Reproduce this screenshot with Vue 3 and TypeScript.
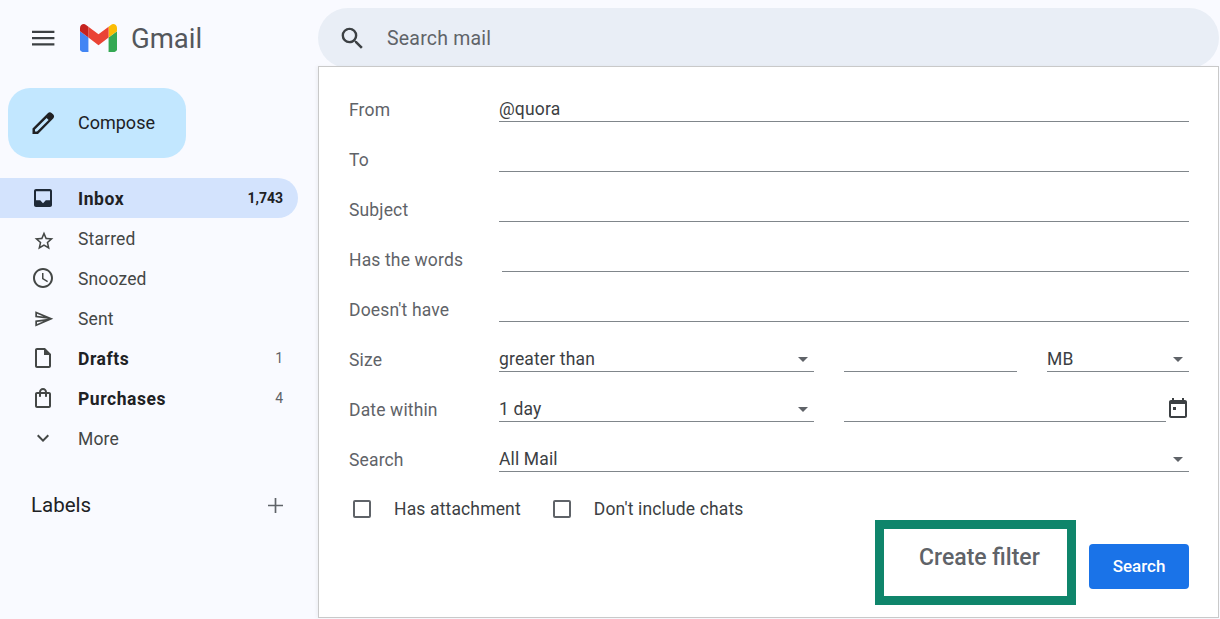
<script setup lang="ts">
interface NavItem {
  label: string
  icon: string
  box?: string
  count?: string
  bold?: boolean
  active?: boolean
}

const navItems: NavItem[] = [
  {
    label: 'Inbox',
    count: '1,743',
    bold: true,
    active: true,
    icon: 'M5 3h14c1.1 0 2 .9 2 2v14c0 1.1-.9 2-2 2H5c-1.1 0-2-.9-2-2V5c0-1.1.9-2 2-2zm0 2.2v9h4.2l2.8 3 2.8-3H19v-9z',
  },
  {
    label: 'Starred',
    box: '-1.8 -3.9 25.5 25.5',
    icon: 'M22 9.24l-7.19-.62L12 2 9.19 8.63 2 9.24l5.46 4.73L5.82 21 12 17.27 18.18 21l-1.63-7.03L22 9.24zM12 15.4l-3.76 2.27 1-4.28-3.32-2.88 4.38-.38L12 6.1l1.71 4.04 4.38.38-3.32 2.88 1 4.28L12 15.4z',
  },
  {
    label: 'Snoozed',
    icon: 'M11.99 2C6.47 2 2 6.48 2 12s4.47 10 9.99 10C17.52 22 22 17.52 22 12S17.52 2 11.99 2zM12 20c-4.42 0-8-3.58-8-8s3.58-8 8-8 8 3.58 8 8-3.58 8-8 8zm.5-13H11v6l5.25 3.15.75-1.23-4.5-2.67z',
  },
  {
    label: 'Sent',
    box: '-3 -3 28 28',
    icon: 'M4.01 6.03l7.51 3.22-7.52-1 .01-2.22m7.5 8.72L4 17.97v-2.22l7.51-1M2.01 3L2 10l15 2-15 2 .01 7L23 12 2.01 3z',
  },
  {
    label: 'Drafts',
    count: '1',
    bold: true,
    icon: 'M14 2H6c-1.1 0-1.99.9-1.99 2L4 20c0 1.1.89 2 1.99 2H18c1.1 0 2-.9 2-2V8l-6-6zM6 20V4h7v5h5v11H6z',
  },
  {
    label: 'Purchases',
    count: '4',
    bold: true,
    icon: 'M18 6h-2c0-2.21-1.79-4-4-4S8 3.79 8 6H6c-1.1 0-2 .9-2 2v12c0 1.1.9 2 2 2h12c1.1 0 2-.9 2-2V8c0-1.1-.9-2-2-2zm-6-2c1.1 0 2 .9 2 2h-4c0-1.1.9-2 2-2zm6 16H6V8h2v2c0 .55.45 1 1 1s1-.45 1-1V8h4v2c0 .55.45 1 1 1s1-.45 1-1V8h2v12z',
  },
  {
    label: 'More',
    icon: 'M16.59 8.59L12 13.17 7.41 8.59 6 10l6 6 6-6z',
  },
]

const textRows = [
  { label: 'From', value: '@quora' },
  { label: 'To', value: '' },
  { label: 'Subject', value: '' },
  { label: 'Has the words', value: '', shifted: true },
  { label: "Doesn't have", value: '' },
]
</script>

<template>
  <div class="page">
    <aside class="sidebar">
      <div class="brand">
        <svg class="menu-icon" width="24" height="24" viewBox="0 0 24 24">
          <path d="M1 4.7h22.4v2.2H1zM1 11h22.4v2.2H1zM1 17.3h22.4v2.2H1z" fill="#3c4043" />
        </svg>
        <svg class="logo" width="37" height="28" viewBox="52 42 88 66">
          <path fill="#4285f4" d="M58 108h14V74L52 59v43c0 3.32 2.69 6 6 6" />
          <path fill="#34a853" d="M120 108h14c3.32 0 6-2.69 6-6V59l-20 15" />
          <path fill="#fbbc04" d="M120 48v26l20-15v-8c0-7.42-8.47-11.65-14.4-7.2" />
          <path fill="#ea4335" d="M72 74V48l24 18 24-18v26L96 92" />
          <path fill="#c5221f" d="M52 51v8l20 15V48l-5.6-4.2c-5.94-4.45-14.4-.22-14.4 7.2" />
        </svg>
        <span class="wordmark">Gmail</span>
      </div>

      <button class="compose">
        <svg width="24" height="24" viewBox="0 0 24 24">
          <path
            fill="#202124"
            fill-rule="evenodd"
            d="M1.5 23v-5.5L16.8 2.2c1-1 2.7-1.2 3.8-.3l1.7 1.6c1.1 1.2 1 2.9-.1 4L7 23zM4 20.5h2L17.6 9l-2-2L4 18.5z"
          />
        </svg>
        <span>Compose</span>
      </button>

      <nav class="nav">
        <div
          v-for="item in navItems"
          :key="item.label"
          class="nav-item"
          :class="{ active: item.active, bold: item.bold }"
        >
          <svg width="24" height="24" :viewBox="item.box || '0 0 24 24'">
            <path :d="item.icon" fill="currentColor" fill-rule="evenodd" />
          </svg>
          <span class="nav-label">{{ item.label }}</span>
          <span v-if="item.count" class="nav-count">{{ item.count }}</span>
        </div>
      </nav>

      <div class="labels">
        <span>Labels</span>
        <svg width="15" height="15" viewBox="1 1 16 16">
          <path d="M8.1 1h1.8v7.1H17v1.8H9.9V17H8.1V9.9H1V8.1h7.1z" fill="#5f6368" />
        </svg>
      </div>
    </aside>

    <main class="main">
      <div class="search-bar">
        <svg width="29" height="29" viewBox="0 0 24 24">
          <path
            fill="#3c4043"
            d="M15.5 14h-.79l-.28-.27A6.47 6.47 0 0 0 16 9.5 6.5 6.5 0 1 0 9.5 16c1.61 0 3.09-.59 4.23-1.57l.27.28v.79l5 4.99L20.49 19l-4.99-5zm-6 0C7.01 14 5 11.99 5 9.5S7.01 5 9.5 5 14 7.01 14 9.5 11.99 14 9.5 14z"
          />
        </svg>
        <span>Search mail</span>
      </div>

      <section class="panel">
        <div v-for="row in textRows" :key="row.label" class="row">
          <label>{{ row.label }}</label>
          <div class="field" :class="{ shifted: row.shifted }">{{ row.value }}</div>
        </div>

        <div class="row">
          <label>Size</label>
          <div class="split">
            <div class="field select narrow">greater than<i class="caret"></i></div>
            <div class="field size-input"></div>
            <div class="field select unit">MB<i class="caret"></i></div>
          </div>
        </div>

        <div class="row">
          <label>Date within</label>
          <div class="split">
            <div class="field select narrow">1 day<i class="caret"></i></div>
            <div class="field date-input"></div>
            <svg class="calendar" width="24" height="24" viewBox="0 0 24 24">
              <path
                fill="#3c4043"
                d="M19 4h-1V2h-2v2H8V2H6v2H5c-1.1 0-2 .9-2 2v14c0 1.1.9 2 2 2h14c1.1 0 2-.9 2-2V6c0-1.1-.9-2-2-2zm0 16H5V8h14v12zM7 11h3v3H7z"
              />
            </svg>
          </div>
        </div>

        <div class="row">
          <label>Search</label>
          <div class="field select">All Mail<i class="caret"></i></div>
        </div>

        <div class="checks">
          <div class="check"><i class="box"></i>Has attachment</div>
          <div class="check"><i class="box"></i>Don't include chats</div>
        </div>

        <div class="actions">
          <div class="create-filter">Create filter</div>
          <button class="search-btn">Search</button>
        </div>
      </section>
    </main>
  </div>
</template>

<style scoped>
.page {
  display: flex;
  width: 1220px;
  height: 619px;
  overflow: hidden;
  background: #f9faff;
  font-family: Roboto, "Liberation Sans", sans-serif;
  color: #3c4043;
}

/* ---- Sidebar ---- */
.sidebar {
  width: 318px;
  flex-shrink: 0;
}

.brand {
  display: flex;
  align-items: center;
  height: 76px;
  padding-left: 31px;
}

.menu-icon {
  margin-right: 25px;
}

.wordmark {
  margin-left: 14px;
  font-size: 27.5px;
  color: #54575c;
}

.compose {
  display: flex;
  align-items: center;
  gap: 23px;
  width: 178px;
  height: 70px;
  margin: 12px 0 20px 8px;
  padding: 0 0 2px 23px;
  border: 0;
  border-radius: 22px;
  background: #c2e7ff;
  font: 400 18px Roboto, sans-serif;
  color: #202124;
}

.compose svg {
  margin-top: 2px;
}

.nav-item {
  display: flex;
  align-items: center;
  width: 298px;
  height: 40px;
  padding: 0 15px 0 31px;
  box-sizing: border-box;
  border-radius: 0 20px 20px 0;
  font-size: 17.5px;
  letter-spacing: 0.15px;
  color: #444746;
}

.nav-item svg {
  margin-right: 23px;
}

.nav-label {
  padding-top: 2px;
}

.nav-item.bold .nav-label {
  font-weight: 700;
  letter-spacing: 0.55px;
  color: #202124;
}

.nav-item.active {
  background: #d3e3fd;
  color: #1f2a37;
}

.nav-count {
  margin-left: auto;
  font-size: 14px;
  letter-spacing: 0;
  color: #5f6368;
}

.nav-item.active .nav-count {
  font-weight: 700;
  color: #202124;
}

.labels {
  display: flex;
  align-items: center;
  justify-content: space-between;
  width: 298px;
  height: 28px;
  margin-top: 33px;
  padding: 0 15px 0 31px;
  box-sizing: border-box;
  font-size: 20.5px;
  color: #202124;
}

/* ---- Search bar + filter panel ---- */
.main {
  width: 901px;
}

.search-bar {
  display: flex;
  align-items: center;
  gap: 20px;
  height: 60px;
  margin-top: 8px;
  padding-left: 20px;
  border-radius: 30px;
  background: #e9eef6;
  font-size: 19.5px;
  letter-spacing: 0.2px;
  color: #5f6368;
}

.panel {
  position: relative;
  height: 552px;
  margin-top: -2px;
  padding: 5px 29px 0 30px;
  box-sizing: border-box;
  border: 1px solid #c9c9c9;
  background: #fff;
  box-shadow: -2px 0 3px rgba(0, 0, 0, 0.04);
}

.row {
  display: grid;
  grid-template-columns: 150px 1fr;
  align-items: end;
  height: 50px;
}

.row label {
  line-height: 26px;
  margin-bottom: -1px;
  font-size: 17.5px;
  letter-spacing: 0.15px;
  color: #5f6368;
}

.field {
  position: relative;
  height: 26px;
  line-height: 27px;
  box-sizing: border-box;
  border-bottom: 1px solid #80868b;
  font-size: 17.5px;
  letter-spacing: 0.15px;
  color: #3c4043;
}

.field.shifted {
  margin-left: 3px;
}

.split {
  display: flex;
  align-items: flex-end;
}

.narrow {
  width: 315px;
}

.size-input {
  width: 173px;
  margin: 0 30px;
}

.unit {
  width: 142px;
}

.date-input {
  width: 322px;
  margin-left: 30px;
}

.calendar {
  flex-shrink: 0;
  margin-bottom: 2px;
}

.caret {
  position: absolute;
  right: 6px;
  top: 11px;
  border-left: 5.5px solid transparent;
  border-right: 5.5px solid transparent;
  border-top: 5px solid #5f6368;
}

.checks {
  display: flex;
  gap: 32px;
  height: 22px;
  margin-top: 26px;
  padding-left: 4px;
}

.check {
  display: flex;
  align-items: center;
  gap: 23px;
  font-size: 17.5px;
  letter-spacing: 0.15px;
  line-height: 22px;
  color: #3c4043;
}

.box {
  width: 18px;
  height: 18px;
  box-sizing: border-box;
  border: 2px solid #5f6368;
  border-radius: 2px;
}

.actions {
  display: flex;
  align-items: flex-start;
  justify-content: flex-end;
  gap: 13px;
}

.create-filter {
  width: 201px;
  height: 85px;
  box-sizing: border-box;
  padding: 15px 0 0 35px;
  border: 9px solid #0f856b;
  font-size: 23px;
  font-weight: 500;
  color: #5f6368;
}

.search-btn {
  width: 100px;
  height: 45px;
  margin-top: 24px;
  padding: 0 0 2px;
  border: 0;
  border-radius: 4px;
  background: #1a73e8;
  font: 500 17px Roboto, sans-serif;
  color: #fff;
}
</style>
